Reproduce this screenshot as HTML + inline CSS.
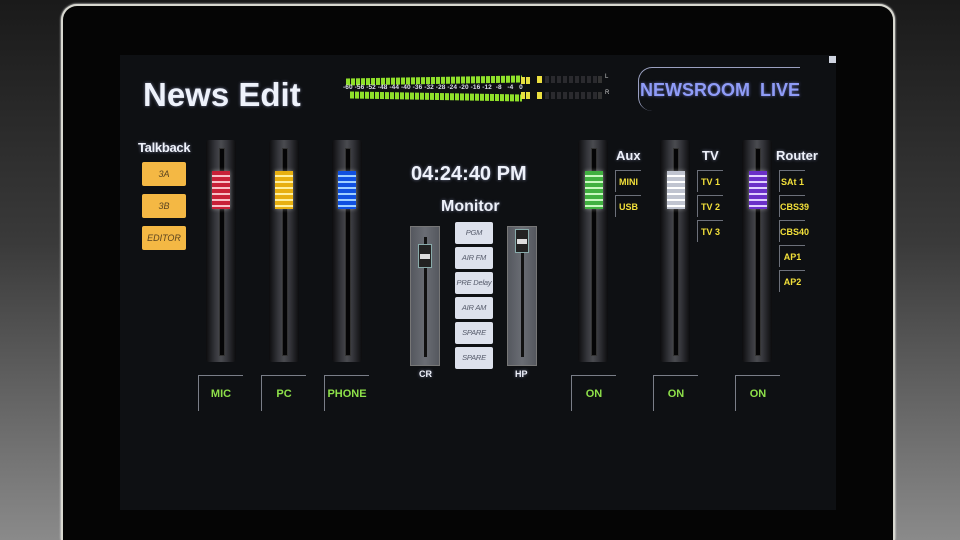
<!DOCTYPE html>
<html><head><meta charset="utf-8"><style>
*{margin:0;padding:0;box-sizing:border-box}
html{width:960px;height:540px;overflow:hidden}
body{width:960px;height:540px;overflow:hidden;background:linear-gradient(180deg,#1a1a1a 0%,#3a3a3a 45%,#8a8a8a 100%);font-family:"Liberation Sans",sans-serif;position:relative}
.a{position:absolute}
.bezel{left:61px;top:4px;width:834px;height:536px;border-radius:16px 16px 0 0;background:#050505;border:2px solid #d8d8d0;border-bottom:none;box-shadow:0 0 2px #fff}
.screen{left:120px;top:55px;width:716px;height:455px;background:#0e1013}
.t{color:#eef1fa;font-weight:bold;text-shadow:0 0 3px rgba(200,210,255,.5);white-space:nowrap}
.track{width:30px;height:222px;top:140px;background:linear-gradient(90deg,#0c0c0e 0%,#34353a 30%,#4a4b50 50%,#34353a 70%,#0c0c0e 100%);border-radius:3px}
.track::after{content:"";position:absolute;left:13px;top:8px;width:4px;height:206px;background:#050506;border:1px solid #333}
.knob{width:18px;height:38px;top:171px;z-index:2;box-shadow:0 0 4px rgba(255,255,255,.4)}
.tb{width:44px;height:24px;left:142px;background:#f4b844;border-radius:2px;color:#5a4320;font-size:9px;font-style:italic;text-align:center;line-height:24px}
.lbl{width:45px;height:36px;top:375px;border-top:1px solid #7a7e88;border-left:1px solid #7a7e88;color:#8ee04a;font-weight:bold;font-size:11px;text-align:center;line-height:36px}
.sb{width:26px;height:22px;border-top:1px solid #6c707a;border-left:1px solid #6c707a;color:#f2e03a;font-weight:bold;font-size:9px;text-align:center;line-height:22px;white-space:nowrap}
.mb{left:455px;width:38px;height:22px;background:#dde1ec;border-radius:2px;color:#555a6a;font-size:7.5px;font-style:italic;text-align:center;line-height:22px;white-space:nowrap;letter-spacing:-.2px}
.mt{width:30px;height:140px;top:226px;background:linear-gradient(90deg,#55585f,#6a6d74 50%,#55585f);border:1px solid #777}
.mt::after{content:"";position:absolute;left:13px;top:10px;width:3px;height:120px;background:#111}
.mk{width:14px;height:24px;background:#222;border:1px solid #8aa;z-index:2}
.mk::after{content:"";position:absolute;left:1px;top:9px;width:10px;height:5px;background:#ddd}
.seg{height:7px;background:repeating-linear-gradient(90deg,#8fe02a 0 4px,transparent 4px 5px)}
</style></head><body>
<div class="a bezel"></div>
<div class="a screen"></div>
<div class="a" style="left:829px;top:56px;width:7px;height:7px;background:#cfd4e0"></div>

<div class="a t" style="left:143px;top:76px;font-size:33px;letter-spacing:0px;color:#eef2fb">News Edit</div>

<div class="a seg" style="left:346px;top:77px;width:176px;transform:skewY(-1deg)"></div>
<div class="a" style="left:521px;top:77px;width:10px;height:7px;background:repeating-linear-gradient(90deg,#e8e040 0 4px,transparent 4px 5px)"></div>
<div class="a" style="left:537px;top:76px;width:5px;height:7px;background:#ece040"></div>
<div class="a" style="left:545px;top:76px;width:52px;height:7px;background:repeating-linear-gradient(90deg,#2a2a2e 0 4px,transparent 4px 6px)"></div>
<div class="a" style="left:598px;top:76px;width:4px;height:7px;background:#333"></div>
<div class="a seg" style="left:350px;top:93px;width:172px;transform:skewY(1deg)"></div>
<div class="a" style="left:521px;top:92px;width:10px;height:7px;background:repeating-linear-gradient(90deg,#e8e040 0 4px,transparent 4px 5px)"></div>
<div class="a" style="left:537px;top:92px;width:5px;height:7px;background:#ece040"></div>
<div class="a" style="left:545px;top:92px;width:52px;height:7px;background:repeating-linear-gradient(90deg,#2a2a2e 0 4px,transparent 4px 6px)"></div>
<div class="a" style="left:598px;top:92px;width:4px;height:7px;background:#333"></div>
<div class="a" style="left:343px;top:84px;font-size:6.5px;color:#dde;font-weight:bold;letter-spacing:.1px;white-space:nowrap">-60 -56 -52 -48 -44 -40 -36 -32 -28 -24 -20 -16 -12 &nbsp;-8 &nbsp;&nbsp;-4 &nbsp;&nbsp;0</div>
<div class="a" style="left:605px;top:74px;font-size:6px;color:#ccc">L</div>
<div class="a" style="left:605px;top:90px;font-size:6px;color:#ccc">R</div>

<div class="a" style="left:638px;top:67px;width:162px;height:44px;border-top:1px solid #9aa0c0;border-left:1px solid #9aa0c0;border-radius:14px 0 0 14px"></div>
<div class="a" style="left:640px;top:80px;font-size:18px;letter-spacing:0px;font-weight:bold;color:#8f9cf8;text-shadow:0 0 3px rgba(140,150,255,.6);white-space:nowrap">NEWSROOM&nbsp; LIVE</div>

<div class="a t" style="left:138px;top:140px;font-size:13px;letter-spacing:-0.3px">Talkback</div>
<div class="a tb" style="top:162px">3A</div>
<div class="a tb" style="top:194px">3B</div>
<div class="a tb" style="top:226px">EDITOR</div>

<div class="a track" style="left:206px"></div>
<div class="a track" style="left:269px"></div>
<div class="a track" style="left:332px"></div>
<div class="a knob" style="left:212px;background:repeating-linear-gradient(180deg,#c82038 0 4px,#f8c0c8 4px 6px)"></div>
<div class="a knob" style="left:275px;background:repeating-linear-gradient(180deg,#e8b010 0 4px,#fff0a0 4px 6px)"></div>
<div class="a knob" style="left:338px;background:repeating-linear-gradient(180deg,#1050e0 0 4px,#a0d0ff 4px 6px)"></div>
<div class="a lbl" style="left:198px">MIC</div>
<div class="a lbl" style="left:261px">PC</div>
<div class="a lbl" style="left:324px">PHONE</div>

<div class="a t" style="left:411px;top:163px;font-size:20px">04:24:40 PM</div>
<div class="a t" style="left:441px;top:198px;font-size:16px">Monitor</div>
<div class="a mt" style="left:410px"></div>
<div class="a mk" style="left:418px;top:244px"></div>
<div class="a mt" style="left:507px"></div>
<div class="a mk" style="left:515px;top:229px"></div>
<div class="a mb" style="top:222px">PGM</div>
<div class="a mb" style="top:247px">AIR FM</div>
<div class="a mb" style="top:272px">PRE Delay</div>
<div class="a mb" style="top:297px">AIR AM</div>
<div class="a mb" style="top:322px">SPARE</div>
<div class="a mb" style="top:347px">SPARE</div>
<div class="a t" style="left:419px;top:369px;font-size:9px">CR</div>
<div class="a t" style="left:515px;top:369px;font-size:9px">HP</div>

<div class="a track" style="left:578px"></div>
<div class="a track" style="left:660px"></div>
<div class="a track" style="left:742px"></div>
<div class="a knob" style="left:585px;background:repeating-linear-gradient(180deg,#40b040 0 4px,#c8f8c0 4px 6px)"></div>
<div class="a knob" style="left:667px;background:repeating-linear-gradient(180deg,#c0c4d0 0 4px,#ffffff 4px 6px)"></div>
<div class="a knob" style="left:749px;background:repeating-linear-gradient(180deg,#6a30c8 0 4px,#e0d0ff 4px 6px)"></div>

<div class="a t" style="left:616px;top:148px;font-size:13px">Aux</div>
<div class="a t" style="left:702px;top:148px;font-size:13px">TV</div>
<div class="a t" style="left:776px;top:148px;font-size:13px">Router</div>
<div class="a sb" style="left:615px;top:170px">MINI</div>
<div class="a sb" style="left:615px;top:195px">USB</div>
<div class="a sb" style="left:697px;top:170px">TV 1</div>
<div class="a sb" style="left:697px;top:195px">TV 2</div>
<div class="a sb" style="left:697px;top:220px">TV 3</div>
<div class="a sb" style="left:779px;top:170px">SAt 1</div>
<div class="a sb" style="left:779px;top:195px">CBS39</div>
<div class="a sb" style="left:779px;top:220px">CBS40</div>
<div class="a sb" style="left:779px;top:245px">AP1</div>
<div class="a sb" style="left:779px;top:270px">AP2</div>

<div class="a lbl" style="left:571px">ON</div>
<div class="a lbl" style="left:653px">ON</div>
<div class="a lbl" style="left:735px">ON</div>
</body></html>
